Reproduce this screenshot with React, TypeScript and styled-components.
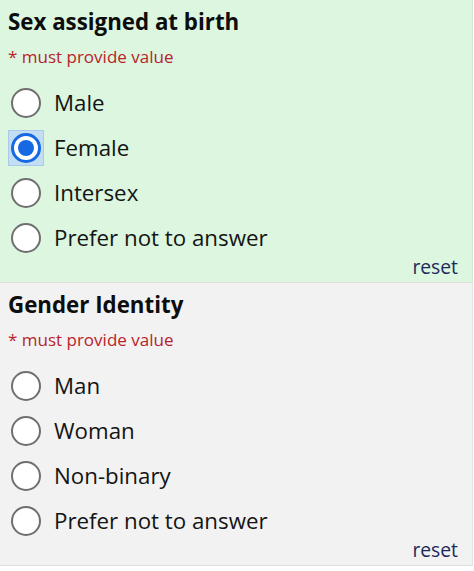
import React, { useState } from 'react';
import styled, { createGlobalStyle } from 'styled-components';

const GlobalStyle = createGlobalStyle`
	html, body {
		margin: 0;
		padding: 0;
		background: #ffffff;
	}
	body {
		font-family: 'Open Sans', 'Noto Sans', sans-serif;
		color: #1a1a1a;
	}
`;

type Question = {
	id: string;
	title: string;
	options: string[];
	answered: boolean;
};

const questions: Question[] = [
	{
		id: 'sex',
		title: 'Sex assigned at birth',
		options: ['Male', 'Female', 'Intersex', 'Prefer not to answer'],
		answered: true,
	},
	{
		id: 'gender',
		title: 'Gender Identity',
		options: ['Man', 'Woman', 'Non-binary', 'Prefer not to answer'],
		answered: false,
	},
];

type RadioProps = { checked: boolean };

const RadioMark: React.FC<RadioProps> = ({ checked }) => (
	<RadioFrame $checked={checked}>
		<RadioCircle $checked={checked}>{checked && <RadioDot />}</RadioCircle>
	</RadioFrame>
);

const QuestionBlock: React.FC<{ question: Question; value: string | null; onChange: (v: string | null) => void }> = ({
	question,
	value,
	onChange,
}) => (
	<Section $answered={question.answered}>
		<Title>{question.title}</Title>
		<Required>* must provide value</Required>
		<Options>
			{question.options.map((opt) => (
				<OptionRow key={opt} onClick={() => onChange(opt)}>
					<RadioMark checked={value === opt} />
					<OptionLabel>{opt}</OptionLabel>
				</OptionRow>
			))}
		</Options>
		<ResetRow>
			<ResetLink onClick={() => onChange(null)}>reset</ResetLink>
		</ResetRow>
	</Section>
);

const App: React.FC = () => {
	const [values, setValues] = useState<Record<string, string | null>>({ sex: 'Female', gender: null });

	return (
		<>
			<GlobalStyle />
			<Page>
				{questions.map((q) => (
					<QuestionBlock
						key={q.id}
						question={q}
						value={values[q.id]}
						onChange={(v) => setValues((prev) => ({ ...prev, [q.id]: v }))}
					/>
				))}
			</Page>
		</>
	);
};
export default App;

const Page = styled.div`
	width: 473px;
	display: flex;
	flex-direction: column;
`;

const Section = styled.section<{ $answered: boolean }>`
	background-color: ${(props) => (props.$answered ? '#dcf6df' : '#f2f2f2')};
	border-bottom: 1px solid #dddddd;
	border-right: 1px solid ${(props) => (props.$answered ? '#d2e8d4' : '#e4e4e4')};
	padding: 7px 8px 6px 8px;
	display: flex;
	flex-direction: column;
`;

const Title = styled.h2`
	margin: 0;
	font-size: 22.3px;
	line-height: 30px;
	font-weight: 700;
	color: #0d0d0d;
`;

const Required = styled.div`
	margin-top: 8px;
	font-size: 17px;
	line-height: 24px;
	color: #b8232b;
`;

const Options = styled.div`
	margin-top: 14px;
	display: flex;
	flex-direction: column;
	gap: 5px;
`;

const OptionRow = styled.label`
	display: flex;
	align-items: center;
	height: 40px;
	cursor: pointer;
`;

const RadioFrame = styled.span<{ $checked: boolean }>`
	width: 36px;
	height: 36px;
	box-sizing: border-box;
	display: flex;
	align-items: center;
	justify-content: center;
	flex-shrink: 0;
	background: ${(props) => (props.$checked ? '#c3def2' : 'transparent')};
	border: 1px solid ${(props) => (props.$checked ? '#a7cbe8' : 'transparent')};
`;

const RadioCircle = styled.span<{ $checked: boolean }>`
	width: 30px;
	height: 30px;
	box-sizing: border-box;
	border-radius: 50%;
	background: #ffffff;
	border: ${(props) => (props.$checked ? '3px solid #1668e3' : '2px solid #6f6f6f')};
	display: flex;
	align-items: center;
	justify-content: center;
`;

const RadioDot = styled.span`
	width: 16px;
	height: 16px;
	border-radius: 50%;
	background: #1668e3;
`;

const OptionLabel = styled.span`
	margin-left: 10px;
	font-size: 22.3px;
	line-height: 30px;
	color: #141414;
`;

const ResetRow = styled.div`
	display: flex;
	justify-content: flex-end;
	padding-right: 6px;
`;

const ResetLink = styled.a`
	font-size: 19.3px;
	line-height: 18px;
	color: #1b2a5c;
	cursor: pointer;
`;
